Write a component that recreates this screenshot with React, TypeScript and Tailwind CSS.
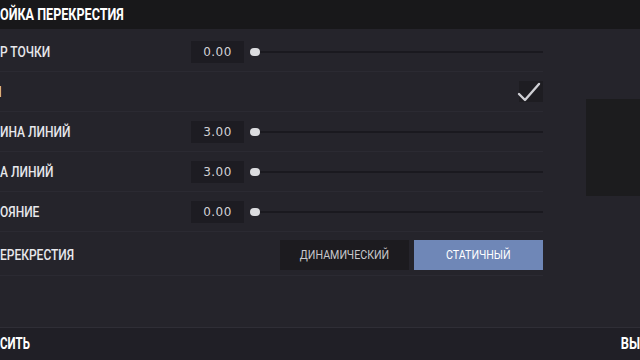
import React from 'react';

const FONT = { fontFamily: 'Roboto, "DejaVu Sans", sans-serif' };

const Label: React.FC<{ children: React.ReactNode }> = ({ children }) => (
  <span className="inline-block origin-left scale-x-[0.8] text-[15px] font-medium text-[#e8e8ec] whitespace-nowrap">{children}</span>
);

const SliderRow: React.FC<{ label: string; value: string }> = ({ label, value }) => (
  <div className="h-[40px] flex items-center border-b border-[#2b2a32]">
    <div className="w-[191px]"><Label>{label}</Label></div>
    <div className="w-[53px] h-[22px] bg-[#1d1c22] flex items-center justify-center text-[12px] tracking-[0.5px] text-[#d2d2d6]" style={{ fontFamily: '"DejaVu Sans", sans-serif' }}>
      {value}
    </div>
    <div className="ml-[6px] w-[10px] h-[8px] rounded-full bg-[#dcdcdf]" />
    <div className="flex-1 h-[2px] bg-[#1a191f]" />
  </div>
);

const App: React.FC = () => {
  return (
    <div className="w-[640px] h-[360px] bg-[#25242b] flex flex-col overflow-hidden" style={FONT}>
      <header className="h-[29px] shrink-0 bg-[#18181a] flex items-center">
        <h1 className="inline-block origin-left scale-x-[0.74] text-[17px] font-bold text-white leading-none whitespace-nowrap">ОЙКА ПЕРЕКРЕСТИЯ</h1>
      </header>

      <div className="flex-1 flex pt-[3px]">
        <div className="w-[543px] flex flex-col">
          <SliderRow label="Р ТОЧКИ" value="0.00" />

          <div className="h-[40px] flex items-center border-b border-[#2b2a32]">
            <div className="flex-1 overflow-hidden">
              <span className="block -ml-[7px]"><Label>Н</Label></span>
            </div>
            <div className="w-[24px] h-[21px] bg-[#1e1d22] flex items-center justify-center">
              <svg width="26" height="22" viewBox="0 0 26 22" className="-ml-[4px]">
                <path d="M3 13 L9 19 L23 3" fill="none" stroke="#cfcfd4" strokeWidth="2.4" strokeLinecap="round" strokeLinejoin="round" />
              </svg>
            </div>
          </div>

          <SliderRow label="ИНА ЛИНИЙ" value="3.00" />
          <SliderRow label="А ЛИНИЙ" value="3.00" />
          <SliderRow label="ОЯНИЕ" value="0.00" />

          <div className="h-[44px] pt-[2px] flex items-center border-b border-[#2b2a32]">
            <div className="flex-1"><Label>ЕРЕКРЕСТИЯ</Label></div>
            <button className="w-[129px] h-[30px] bg-[#1c1b1f] flex items-center justify-center">
              <span className="inline-block scale-x-[0.82] text-[13px] text-[#c8c8cc] whitespace-nowrap">ДИНАМИЧЕСКИЙ</span>
            </button>
            <button className="ml-[5px] w-[129px] h-[30px] bg-[#6f87b7] flex items-center justify-center">
              <span className="inline-block scale-x-[0.82] text-[13px] text-white whitespace-nowrap">СТАТИЧНЫЙ</span>
            </button>
          </div>
        </div>

        <div className="flex-1 pl-[43px] pt-[67px]">
          <div className="h-[97px] bg-[#1c1c1e]" />
        </div>
      </div>

      <footer className="h-[33px] shrink-0 bg-[#201f26] border-t border-[#2f2e36] flex items-center justify-between">
        <span className="inline-block origin-left scale-x-[0.72] text-[16px] font-bold text-white whitespace-nowrap">СИТЬ</span>
        <span className="inline-block origin-right scale-x-[0.8] text-[16px] font-bold text-white whitespace-nowrap">ВЫ</span>
      </footer>
    </div>
  );
};

export default App;
